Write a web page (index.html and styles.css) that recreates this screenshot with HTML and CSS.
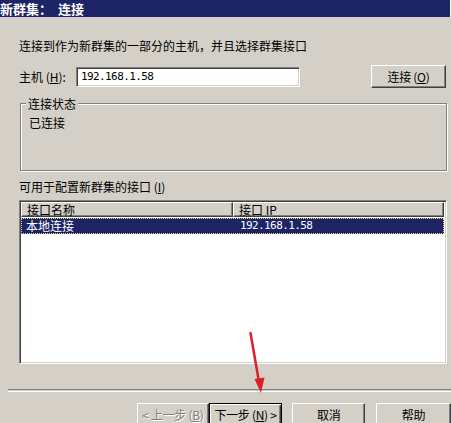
FILE: index.html
```html
<!DOCTYPE html>
<html>
<head>
<meta charset="utf-8">
<link rel="stylesheet" href="styles.css">
</head>
<body>
<div class="window">
  <div class="titlebar"><span class="title">新群集：&nbsp; 连接</span></div>
  <div class="main">
    <div class="intro">连接到作为新群集的一部分的主机，并且选择群集接口</div>
    <div class="hostrow">
      <span class="label">主机 (<u>H</u>):</span>
      <div class="input">192.168.1.58</div>
      <div class="spacer"></div>
      <div class="btn connect">连接 (<u>O</u>)</div>
    </div>
    <fieldset class="group">
      <legend>连接状态</legend>
      <div class="status">已连接</div>
    </fieldset>
    <div class="listlabel">可用于配置新群集的接口 (<u>I</u>)</div>
    <div class="list">
      <div class="header">
        <div class="hcell c1">接口名称</div>
        <div class="hcell c2">接口 IP</div>
      </div>
      <div class="row selected">
        <div class="cell c1">本地连接</div>
        <div class="cell c2">192.168.1.58</div>
      </div>
    </div>
  </div>
  <div class="separator"></div>
  <div class="buttons">
    <div class="btn disabled">&lt; 上一步 (<u>B</u>)</div>
    <div class="btn default">下一步 (<u>N</u>) &gt;</div>
    <div class="btn cancel">取消</div>
    <div class="btn help">帮助</div>
  </div>
  <svg class="arrow" width="451" height="423" viewBox="0 0 451 423">
    <line x1="250.5" y1="333" x2="259" y2="382" stroke="#dd2026" stroke-width="2.5" stroke-linecap="round"/>
    <polygon points="254.5,379 264.5,377.5 261,393" fill="#dd2026"/>
  </svg>
</div>
</body>
</html>
```
FILE: styles.css
```css
html, body {
  margin: 0;
  padding: 0;
  background: #d4d0c8;
}
body {
  font-family: "Noto Sans CJK SC", "DejaVu Sans", sans-serif;
  font-size: 12px;
  color: #000;
  overflow: hidden;
}
.window {
  position: relative;
  width: 451px;
  height: 423px;
  overflow: hidden;
}
u { text-decoration: underline; text-underline-offset: 1px; }

.titlebar {
  height: 17px;
  width: 450px;
  background: #1c2466;
  border-right: 1px solid #fff;
  color: #fff;
  font-weight: bold;
  font-size: 13px;
  line-height: 17px;
}
.title { margin-left: 0; }

.main {
  padding: 0 5px 0 19px;
}
.intro {
  margin-top: 21px;
  line-height: 16px;
  height: 16px;
}
.hostrow {
  display: flex;
  align-items: center;
  margin-top: 11px;
  height: 23px;
}
.label { width: 57px; line-height: 16px; }
.input {
  box-sizing: border-box;
  width: 224px;
  height: 20px;
  background: #fff;
  border-top: 1px solid #808080;
  border-left: 1px solid #808080;
  border-right: 1px solid #fff;
  border-bottom: 1px solid #fff;
  box-shadow: inset 1px 1px 0 #404040, inset -1px -1px 0 #d4d0c8;
  padding: 1px 4px;
  line-height: 16px;
  font-family: "DejaVu Sans Mono", monospace;
  font-size: 11px;
  letter-spacing: -0.6px;
}
.spacer { flex: 1; }

.btn {
  box-sizing: border-box;
  width: 75px;
  height: 23px;
  display: flex;
  align-items: center;
  justify-content: center;
  background: #d4d0c8;
  border-top: 1px solid #fff;
  border-left: 1px solid #fff;
  border-right: 1px solid #404040;
  border-bottom: 1px solid #404040;
  box-shadow: inset -1px -1px 0 #808080;
  line-height: 16px;
  white-space: nowrap;
  letter-spacing: -0.3px;
}

.group {
  box-sizing: border-box;
  margin: 9px 0 0 1px;
  padding: 0 8px;
  width: 427px;
  height: 74px;
  border: 1px solid #808080;
  box-shadow: inset 1px 1px 0 #fff, 1px 1px 0 #fff;
  min-width: 0;
}
.group legend {
  padding: 0 2px;
  margin-left: -3px;
  line-height: 13px;
  background: #d4d0c8;
}
.status {
  margin-top: 5px;
  line-height: 16px;
}

.listlabel {
  margin-top: 8px;
  line-height: 16px;
}
.list {
  box-sizing: border-box;
  margin-top: 5px;
  width: 428px;
  height: 164px;
  background: #fff;
  border-top: 1px solid #808080;
  border-left: 1px solid #808080;
  border-right: 1px solid #fff;
  border-bottom: 1px solid #fff;
  box-shadow: inset 1px 1px 0 #404040, inset -1px -1px 0 #d4d0c8;
  padding: 1px 2px 1px 1px;
}
.header {
  display: flex;
  height: 15px;
}
.hcell {
  box-sizing: border-box;
  height: 15px;
  background: #d4d0c8;
  border-top: 1px solid #fff;
  border-left: 1px solid #fff;
  border-right: 1px solid #404040;
  border-bottom: 1px solid #404040;
  box-shadow: inset -1px -1px 0 #808080;
  line-height: 13px;
  padding-left: 5px;
  font-size: 12px;
  white-space: nowrap;
}
.hcell.c1 { width: 212px; }
.hcell.c2 { width: 211px; }
.row {
  display: flex;
  height: 16px;
  margin-top: 1px;
}
.row.selected {
  box-sizing: border-box;
  background: #1c2466;
  color: #fff;
  border: 1px dotted #e9d97a;
  width: 423px;
}
.cell {
  line-height: 14px;
  white-space: nowrap;
}
.cell.c1 { width: 212px; padding-left: 4px; box-sizing: border-box; }
.cell.c2 {
  padding-left: 6px;
  font-family: "DejaVu Sans Mono", monospace;
  font-size: 11px;
  letter-spacing: -0.6px;
}

.separator {
  margin: 25px 0 0 8px;
  height: 1px;
  border-top: 1px solid #808080;
  border-bottom: 1px solid #fff;
}
.buttons {
  display: flex;
  margin-top: 11px;
  padding-left: 137px;
}
.btn.disabled {
  width: 74px;
  color: #808080;
  text-shadow: 1px 1px 0 #fff;
}
.btn.default {
  width: 76px;
  border: 1px solid #000;
  box-shadow: inset 1px 1px 0 #fff, inset -1px -1px 0 #404040, inset -2px -2px 0 #808080;
}
.btn.cancel { margin-left: 10px; }
.btn.help { margin-left: 11px; flex: none; }

.arrow {
  position: absolute;
  left: 0;
  top: 0;
  pointer-events: none;
}
```
